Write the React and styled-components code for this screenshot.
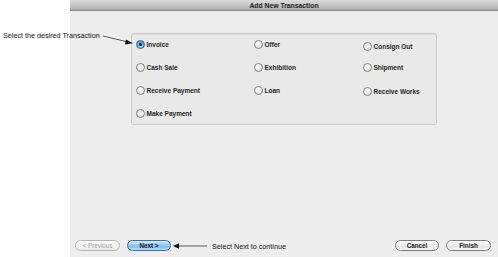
import React from "react";
import styled, { createGlobalStyle } from "styled-components";

const Global = createGlobalStyle`
  html, body { margin: 0; padding: 0; background: #ffffff; }
  body { font-family: "Liberation Sans", Arial, sans-serif; }
  * { box-sizing: border-box; }
`;

const Page = styled.div`
  position: relative;
  width: 498px;
  height: 257px;
  display: flex;
  overflow: hidden;
`;

const Window = styled.div`
  margin-left: 70px;
  flex: 1;
  display: flex;
  flex-direction: column;
  background: #ededed;
`;

const TitleBar = styled.div`
  height: 11px;
  flex: none;
  display: flex;
  align-items: center;
  justify-content: center;
  background: linear-gradient(#dcdcdc, #b4b4b4 90%, #a0a0a0);
  border-bottom: 1px solid #8c8c8c;
  font-size: 6.8px;
  font-weight: bold;
  color: #222;
`;

const Body = styled.div`
  flex: 1;
  padding: 22px 0 0 61px;
`;

const GroupBox = styled.div`
  width: 306px;
  height: 92px;
  border: 1px solid #c9c9c9;
  border-radius: 3px;
  background: #e9e9e9;
  box-shadow: inset 0 1px 0 #dedede;
  display: grid;
  grid-template-columns: 118px 109px 1fr;
  grid-auto-rows: 23px;
  padding: 4px 0 0 4px;
`;

const RadioRow = styled.label`
  display: flex;
  align-items: center;
  gap: 1.5px;
  height: 12px;
  margin-top: ${(p) => p.$drop || 0}px;
  font-size: 6.5px;
  font-weight: bold;
  color: #262626;
`;

const RadioDot = styled.span`
  width: 9px;
  height: 9px;
  border-radius: 50%;
  flex: none;
  display: flex;
  align-items: center;
  justify-content: center;
  border: 1px solid ${(p) => (p.$on ? "#35608f" : "#7d7d7d")};
  background: ${(p) =>
    p.$on
      ? "radial-gradient(circle at 50% 70%, #bfe3ff, #4e97d8 70%)"
      : "linear-gradient(#ffffff, #e4e4e4)"};
  &::after {
    content: "";
    display: ${(p) => (p.$on ? "block" : "none")};
    width: 3px;
    height: 3px;
    border-radius: 50%;
    background: #0e1a2a;
  }
`;

const Footer = styled.div`
  height: 17px;
  flex: none;
  display: flex;
  align-items: flex-start;
  padding: 0 7px 0 5px;
  gap: 7px;
`;

const Spacer = styled.div`
  flex: 1;
`;

const Button = styled.button`
  height: 11px;
  width: ${(p) => p.$w}px;
  padding: 0;
  border-radius: 6px;
  font-family: "Liberation Sans", Arial, sans-serif;
  font-size: 6.3px;
  display: flex;
  align-items: center;
  justify-content: center;
  border: 1px solid ${(p) => (p.$primary ? "#3f6c9e" : p.$disabled ? "#b5b5b5" : "#7e7e7e")};
  color: ${(p) => (p.$disabled ? "#a6a6a6" : "#1a1a1a")};
  font-weight: ${(p) => (p.$disabled ? "normal" : "bold")};
  background: ${(p) =>
    p.$primary
      ? "linear-gradient(#d4ecff, #8cc6f2 50%, #6fb3ea 51%, #b6e1ff)"
      : p.$disabled
      ? "linear-gradient(#fafafa, #ececec)"
      : "linear-gradient(#ffffff, #ebebeb 50%, #e0e0e0 51%, #f6f6f6)"};
`;

const Callout = styled.div`
  position: absolute;
  left: ${(p) => p.$x}px;
  top: ${(p) => p.$y}px;
  font-size: 7.2px;
  color: #111;
  white-space: nowrap;
  line-height: 9px;
`;

const ArrowSvg = styled.svg`
  position: absolute;
  left: 0;
  top: 0;
  pointer-events: none;
`;

const options = [
  ["Invoice", 0, true],
  ["Offer", 0],
  ["Consign Out", 2],
  ["Cash Sale", 0],
  ["Exhibition", 0],
  ["Shipment", 0],
  ["Receive Payment", 0],
  ["Loan", 0],
  ["Receive Works", 1],
  ["Make Payment", 0],
];

export default function App() {
  return (
    <>
      <Global />
      <Page>
        <Window>
          <TitleBar>Add New Transaction</TitleBar>
          <Body>
            <GroupBox>
              {options.map(([label, drop, on]) => (
                <RadioRow key={label} $drop={drop}>
                  <RadioDot $on={on} />
                  {label}
                </RadioRow>
              ))}
            </GroupBox>
          </Body>
          <Footer>
            <Button $w={45} $disabled>&lt; Previous</Button>
            <Button $w={44} $primary>Next &gt;</Button>
            <Spacer />
            <Button $w={44}>Cancel</Button>
            <Button $w={45}>Finish</Button>
          </Footer>
        </Window>
        <Callout $x={3} $y={31}>Select the desired Transaction</Callout>
        <Callout $x={212} $y={242}>Select Next to continue</Callout>
        <ArrowSvg width="498" height="257" viewBox="0 0 498 257">
          <line x1="103" y1="36" x2="128" y2="42" stroke="#333" strokeWidth="0.8" />
          <polygon points="133,43.2 126,39.6 125,44.6" fill="#111" />
          <line x1="207" y1="246" x2="178" y2="246" stroke="#333" strokeWidth="0.8" />
          <polygon points="173,246 179,243.2 179,248.8" fill="#111" />
        </ArrowSvg>
      </Page>
    </>
  );
}
